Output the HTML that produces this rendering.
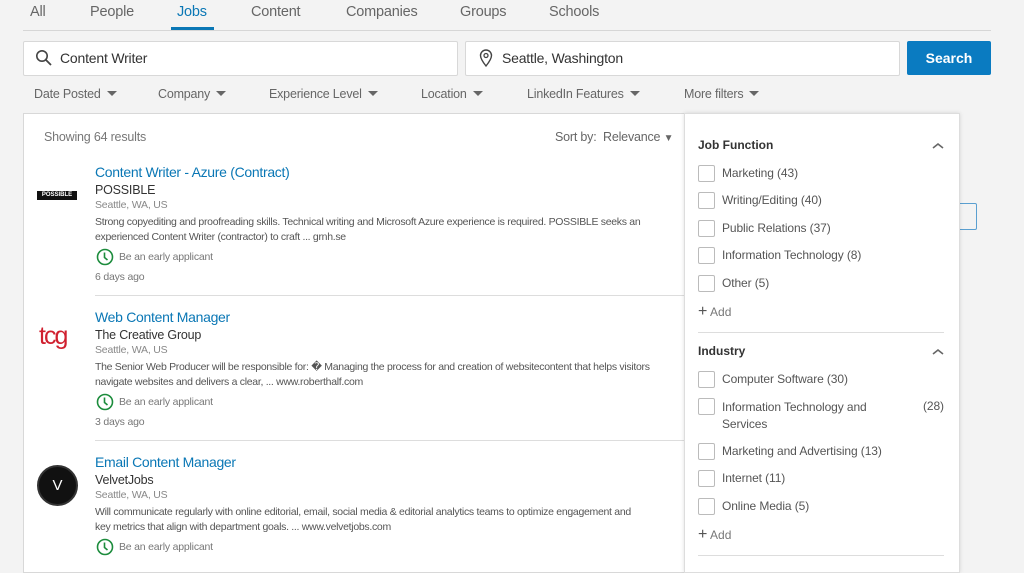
<!DOCTYPE html>
<html><head><meta charset="utf-8">
<style>
*{margin:0;padding:0;box-sizing:border-box}
body{width:1024px;height:560px;overflow:hidden;background:#f3f3f3;font-family:"Liberation Sans",sans-serif;position:relative;color:#333}
.a{position:absolute;white-space:nowrap}
.tab{font-size:14.5px;color:#666;top:4px;letter-spacing:-0.2px}
.flt{font-size:12.5px;color:#666;top:87px;letter-spacing:-0.2px}
.flt:after{content:"";display:inline-block;margin-left:6px;border-left:5px solid transparent;border-right:5px solid transparent;border-top:5px solid #666;vertical-align:2px}
.box{position:absolute;background:#fff;border:1px solid #d8d8d8;border-radius:2px}
.t{font-size:14px;color:#0a77b5;letter-spacing:-0.3px}
.co{font-size:12.5px;color:#333;letter-spacing:-0.2px}
.lo{font-size:10.5px;color:#888;letter-spacing:-0.2px}
.ds{font-size:10.5px;color:#555;line-height:15px;letter-spacing:-0.3px}
.ea{font-size:10.5px;color:#777;letter-spacing:-0.2px}
.cb{position:absolute;left:698px;width:17px;height:17px;border:1px solid #bbb;border-radius:2px;background:#fff}
.lb{position:absolute;left:722px;font-size:12px;color:#555;white-space:nowrap;letter-spacing:-0.1px}
.hd{position:absolute;left:698px;font-size:12px;font-weight:bold;color:#333}
.add{position:absolute;left:698px;font-size:12px;color:#777}
</style></head><body>
<div class="a tab" style="left:30px">All</div>
<div class="a tab" style="left:90px">People</div>
<div class="a tab" style="left:177px;color:#0a77b5">Jobs</div>
<div class="a" style="left:171px;top:27px;width:43px;height:3px;background:#0a77b5"></div>
<div class="a tab" style="left:251px">Content</div>
<div class="a tab" style="left:346px">Companies</div>
<div class="a tab" style="left:460px">Groups</div>
<div class="a tab" style="left:549px">Schools</div>
<div class="a" style="left:23px;top:30px;width:968px;height:1px;background:#d6d6d6"></div>

<div class="box" style="left:23px;top:41px;width:435px;height:35px"></div>
<svg class="a" style="left:35px;top:49px" width="18" height="18" viewBox="0 0 18 18"><circle cx="7" cy="7" r="5.2" fill="none" stroke="#444" stroke-width="1.6"/><path d="M11 11l5 5" stroke="#444" stroke-width="1.8"/></svg>
<div class="a" style="left:60px;top:50px;font-size:14px;color:#333;letter-spacing:-0.2px">Content Writer</div>
<div class="box" style="left:465px;top:41px;width:435px;height:35px"></div>
<svg class="a" style="left:478px;top:48px" width="16" height="20" viewBox="0 0 16 20"><path d="M8 18C4 13 2.5 10 2.5 7.5a5.5 5.5 0 0 1 11 0C13.5 10 12 13 8 18z" fill="none" stroke="#444" stroke-width="1.4"/><circle cx="8" cy="7.5" r="2" fill="none" stroke="#444" stroke-width="1.3"/></svg>
<div class="a" style="left:502px;top:50px;font-size:14px;color:#333;letter-spacing:-0.2px">Seattle, Washington</div>
<div class="a" style="left:907px;top:41px;width:84px;height:34px;background:#0a7bc1;border-radius:2px;color:#fff;font-size:14px;font-weight:bold;text-align:center;line-height:34px">Search</div>

<div class="a flt" style="left:34px">Date Posted</div>
<div class="a flt" style="left:158px">Company</div>
<div class="a flt" style="left:269px">Experience Level</div>
<div class="a flt" style="left:421px">Location</div>
<div class="a flt" style="left:527px">LinkedIn Features</div>
<div class="a flt" style="left:684px">More filters</div>

<div class="a" style="left:960px;top:203px;width:17px;height:27px;border:1px solid #5a9fd0;border-left:none;border-radius:0 2px 2px 0"></div>

<div class="box" style="left:23px;top:113px;width:662px;height:460px;border-radius:0"></div>
<div class="a" style="left:44px;top:130px;font-size:12.5px;color:#777;letter-spacing:-0.2px">Showing 64 results</div>
<div class="a" style="left:555px;top:130px;font-size:12.5px;color:#666;letter-spacing:-0.2px">Sort by:&nbsp; <span style="color:#666">Relevance</span> <span style="font-size:10px">▼</span></div>

<!-- job 1 -->
<div class="a" style="left:37px;top:191px;width:40px;height:9px;background:#111;color:#fff;font-size:6px;font-weight:bold;line-height:9px;text-align:center">POSSIBLE</div>
<div class="a t" style="left:95px;top:164px">Content Writer - Azure (Contract)</div>
<div class="a co" style="left:95px;top:183px">POSSIBLE</div>
<div class="a lo" style="left:95px;top:199px">Seattle, WA, US</div>
<div class="a ds" style="left:95px;top:215px">Strong copyediting and proofreading skills. Technical writing and Microsoft Azure experience is required. POSSIBLE seeks an<br>experienced Content Writer (contractor) to craft ... grnh.se</div>
<svg class="a" style="left:96px;top:248px" width="18" height="18" viewBox="0 0 18 18"><circle cx="9" cy="9" r="7.5" fill="none" stroke="#1c8c3c" stroke-width="1.6"/><path d="M8.5 4.5v5l3 2.5" fill="none" stroke="#1c8c3c" stroke-width="1.6"/></svg>
<div class="a ea" style="left:119px;top:251px">Be an early applicant</div>
<div class="a ea" style="left:95px;top:271px">6 days ago</div>
<div class="a" style="left:95px;top:295px;width:589px;height:1px;background:#ddd"></div>

<!-- job 2 -->
<div class="a" style="left:39px;top:322px;font-size:25px;color:#d0202f;letter-spacing:-2px">tcg</div>
<div class="a t" style="left:95px;top:309px">Web Content Manager</div>
<div class="a co" style="left:95px;top:328px">The Creative Group</div>
<div class="a lo" style="left:95px;top:344px">Seattle, WA, US</div>
<div class="a ds" style="left:95px;top:360px">The Senior Web Producer will be responsible for: � Managing the process for and creation of websitecontent that helps visitors<br>navigate websites and delivers a clear, ... www.roberthalf.com</div>
<svg class="a" style="left:96px;top:393px" width="18" height="18" viewBox="0 0 18 18"><circle cx="9" cy="9" r="7.5" fill="none" stroke="#1c8c3c" stroke-width="1.6"/><path d="M8.5 4.5v5l3 2.5" fill="none" stroke="#1c8c3c" stroke-width="1.6"/></svg>
<div class="a ea" style="left:119px;top:396px">Be an early applicant</div>
<div class="a ea" style="left:95px;top:416px">3 days ago</div>
<div class="a" style="left:95px;top:440px;width:589px;height:1px;background:#ddd"></div>

<!-- job 3 -->
<div class="a" style="left:37px;top:465px;width:41px;height:41px;border-radius:50%;background:#111;border:2px solid #333;color:#fff;font-size:15px;text-align:center;line-height:37px">V</div>
<div class="a t" style="left:95px;top:454px">Email Content Manager</div>
<div class="a co" style="left:95px;top:473px">VelvetJobs</div>
<div class="a lo" style="left:95px;top:489px">Seattle, WA, US</div>
<div class="a ds" style="left:95px;top:505px">Will communicate regularly with online editorial, email, social media &amp; editorial analytics teams to optimize engagement and<br>key metrics that align with department goals. ... www.velvetjobs.com</div>
<svg class="a" style="left:96px;top:538px" width="18" height="18" viewBox="0 0 18 18"><circle cx="9" cy="9" r="7.5" fill="none" stroke="#1c8c3c" stroke-width="1.6"/><path d="M8.5 4.5v5l3 2.5" fill="none" stroke="#1c8c3c" stroke-width="1.6"/></svg>
<div class="a ea" style="left:119px;top:541px">Be an early applicant</div>

<!-- filter panel -->
<div class="a" style="left:684px;top:113px;width:276px;height:460px;background:#fff;border:1px solid #ddd;box-shadow:0 0 4px rgba(0,0,0,.12)"></div>
<div class="hd" style="top:138px">Job Function</div>
<svg class="a" style="left:931px;top:141px" width="14" height="9" viewBox="0 0 14 9"><path d="M2 7l5-4 5 4" fill="none" stroke="#666" stroke-width="1.6"/></svg>
<div class="cb" style="top:165px"></div><div class="lb" style="top:166px">Marketing (43)</div>
<div class="cb" style="top:192px"></div><div class="lb" style="top:193px">Writing/Editing (40)</div>
<div class="cb" style="top:220px"></div><div class="lb" style="top:221px">Public Relations (37)</div>
<div class="cb" style="top:247px"></div><div class="lb" style="top:248px">Information Technology (8)</div>
<div class="cb" style="top:275px"></div><div class="lb" style="top:276px">Other (5)</div>
<div class="add" style="top:303px"><span style="font-size:16px;color:#555">+</span> Add</div>
<div class="a" style="left:698px;top:332px;width:246px;height:1px;background:#ddd"></div>
<div class="hd" style="top:344px">Industry</div>
<svg class="a" style="left:931px;top:347px" width="14" height="9" viewBox="0 0 14 9"><path d="M2 7l5-4 5 4" fill="none" stroke="#666" stroke-width="1.6"/></svg>
<div class="cb" style="top:371px"></div><div class="lb" style="top:372px">Computer Software (30)</div>
<div class="cb" style="top:398px"></div><div class="lb" style="top:399px;line-height:17px">Information Technology and<br>Services</div><div class="lb" style="top:399px;left:923px">(28)</div>
<div class="cb" style="top:443px"></div><div class="lb" style="top:444px">Marketing and Advertising (13)</div>
<div class="cb" style="top:470px"></div><div class="lb" style="top:471px">Internet (11)</div>
<div class="cb" style="top:498px"></div><div class="lb" style="top:499px">Online Media (5)</div>
<div class="add" style="top:526px"><span style="font-size:16px;color:#555">+</span> Add</div>
<div class="a" style="left:698px;top:555px;width:246px;height:1px;background:#ddd"></div>
</body></html>
